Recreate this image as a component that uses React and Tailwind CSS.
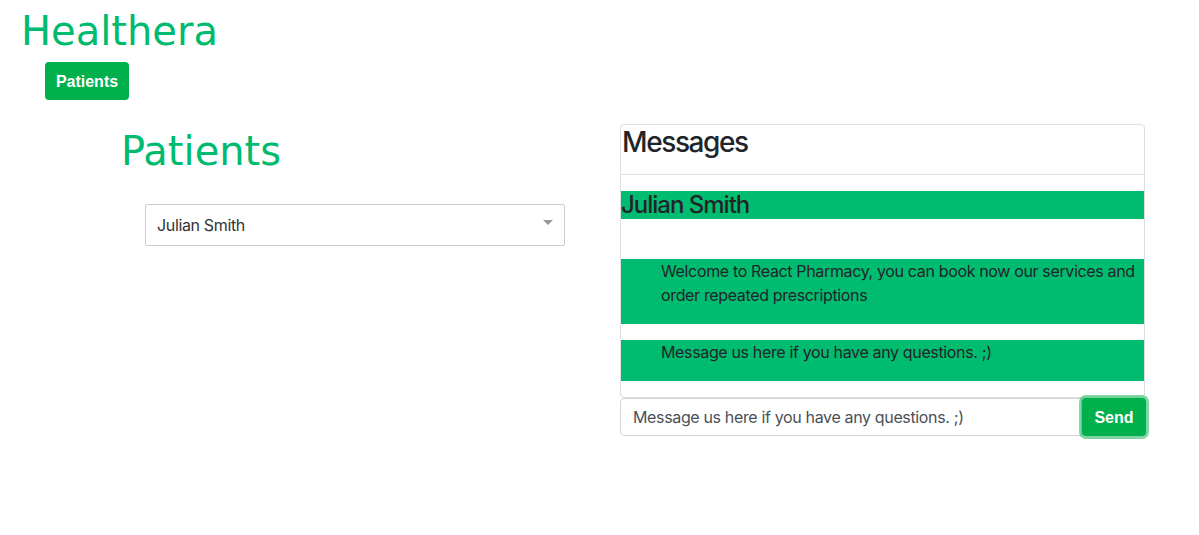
import React, { useState } from 'react';

const messages = [
  'Welcome to React Pharmacy, you can book now our services and order repeated prescriptions',
  'Message us here if you have any questions. ;)',
];

function App() {
  const [draft, setDraft] = useState('Message us here if you have any questions. ;)');

  return (
    <div className="min-h-screen bg-white text-[#212529] tracking-[-0.35px] font-['Inter',sans-serif]">
      {/* Header */}
      <header>
        <h1 className="pl-[21px] pt-[7px] text-[40px] leading-[48px] tracking-normal text-[#00bb6f] font-['DejaVu_Sans',sans-serif]">
          Healthera
        </h1>
        <nav className="mt-[7px] ml-[45px]">
          <button className="h-[38px] w-[84px] rounded-[4px] bg-[#00b04c] pt-[1px] text-[16px] font-bold tracking-normal text-white font-['Liberation_Sans',sans-serif]">
            Patients
          </button>
        </nav>
      </header>

      {/* Main */}
      <main className="mt-[24px] flex">
        <section className="w-[620px] pl-[121px]">
          <h2 className="mt-[3px] text-[40px] leading-[48px] tracking-normal text-[#00bb6f] font-['DejaVu_Sans',sans-serif]">
            Patients
          </h2>
          <div className="relative mt-[29px] ml-[24px] flex h-[42px] w-[420px] items-center rounded-[2px] border border-[#cccccc] pl-[11px] text-[16px] text-[#333333]">
            Julian Smith
            <svg className="absolute right-[11px] top-[15px]" width="10" height="6" viewBox="0 0 10 6">
              <path d="M0 0 L10 0 L5 5 Z" fill="#999999" />
            </svg>
          </div>
        </section>

        <section className="w-[526px]">
          <div className="w-[525px] rounded-[4px] border border-[#dfdfdf]">
            <div className="h-[50px] border-b border-[#dfdfdf] pl-[1px]">
              <h3 className="text-[28px] font-medium leading-[34px] tracking-[-1.4px]">Messages</h3>
            </div>
            <div className="pt-[16px] pb-[16px]">
              <h4 className="bg-[#00bc70] text-[24px] font-medium leading-[28px] tracking-[-1px]">Julian Smith</h4>
              <div className="mt-[40px] flex flex-col gap-[16px]">
                {messages.map((m) => (
                  <div key={m} className="bg-[#00bc70] pl-[40px] pr-[8px] pb-[17px] text-[16px] leading-[24px]">
                    {m}
                  </div>
                ))}
              </div>
            </div>
          </div>
          <div className="flex h-[38px] w-[526px]">
            <input
              value={draft}
              onChange={(e) => setDraft(e.target.value)}
              className="h-full flex-1 rounded-l-[4px] border border-[#ced4da] px-[12px] text-[16px] text-[#495057] outline-none"
            />
            <button className="h-full w-[64px] rounded-[4px] bg-[#00b04c] pt-[1px] text-[16px] font-bold tracking-normal text-white ring-[3px] ring-[#00b04c]/50 font-['Liberation_Sans',sans-serif]">
              Send
            </button>
          </div>
        </section>
      </main>
    </div>
  );
}

export default App;
